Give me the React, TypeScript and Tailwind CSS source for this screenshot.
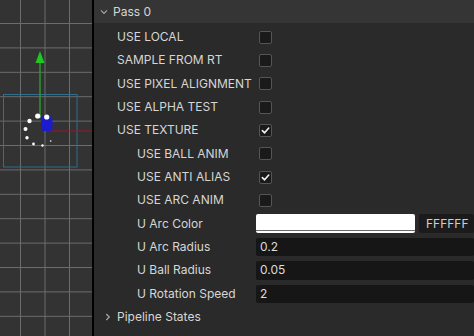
import React from "react";

const font = { fontFamily: "Inter, 'Liberation Sans', sans-serif" };

function Viewport() {
  const hs = Array.from({ length: 13 }, (_, k) => 23.5 + 24.4 * k);
  const vs = [20.5, 45, 69.5];
  return (
    <div className="w-[94px] h-full bg-[#333333] border-r-2 border-black shrink-0">
      <svg width="92" height="336" viewBox="0 0 92 336">
        {hs.map((y) => (
          <line key={"h" + y} x1="0" x2="92" y1={y} y2={y} stroke="#6c6c6c" strokeWidth="1" />
        ))}
        {vs.map((x) => (
          <line key={"v" + x} x1={x} x2={x} y1="0" y2="336" stroke="#6c6c6c" strokeWidth="1" />
        ))}
        <rect x="3.5" y="94.5" width="73.5" height="72.5" fill="none" stroke="#2f6f8f" strokeWidth="1" />
        <line x1="40" x2="40" y1="60" y2="118" stroke="#2c9a2c" strokeWidth="1.5" />
        <polygon points="40,51 35.5,63 44.5,63" fill="#1fc81f" />
        <line x1="51" x2="92" y1="131" y2="131" stroke="#9c1430" strokeWidth="1.2" />
        <rect x="41" y="116" width="11.5" height="15" rx="3" fill="#1c1ccc" />
        <circle cx="37.7" cy="116" r="2.6" fill="#fff" />
        <circle cx="46.7" cy="117" r="2.6" fill="#fff" />
        <circle cx="29.5" cy="121" r="2.2" fill="#fff" />
        <circle cx="25.5" cy="129" r="2" fill="#fff" />
        <circle cx="27" cy="137.7" r="1.7" fill="#fff" />
        <circle cx="33.5" cy="144" r="1.4" fill="#fff" />
        <circle cx="42.5" cy="145.5" r="1.2" fill="#fff" />
        <circle cx="50.7" cy="141" r="0.8" fill="#fff" />
      </svg>
    </div>
  );
}

function Check({ on }: { on?: boolean }) {
  return (
    <div className="w-[13px] h-[13px] rounded-[2px] border border-[#555555] bg-[#1a1a1a] flex items-center justify-center">
      {on && (
        <svg width="9" height="9" viewBox="0 0 10 10">
          <path d="M1.5 5.2 L4 7.6 L8.6 2.3" fill="none" stroke="#f2f2f2" strokeWidth="1.8" strokeLinecap="round" strokeLinejoin="round" />
        </svg>
      )}
    </div>
  );
}

function Row({ label, indent, children }: { label: string; indent?: boolean; children?: React.ReactNode }) {
  return (
    <div className="h-[23.33px] flex items-center">
      <div className={(indent ? "pl-[43px]" : "pl-[23px]") + " w-[162px] shrink-0 text-[12px] text-[#d6d6d6] whitespace-nowrap"}>
        {label}
      </div>
      <div className="flex-1 flex items-center">{children}</div>
    </div>
  );
}

function CheckRow({ label, indent, on }: { label: string; indent?: boolean; on?: boolean }) {
  return (
    <Row label={label} indent={indent}>
      <div className="pl-[3px]">
        <Check on={on} />
      </div>
    </Row>
  );
}

function NumRow({ label, value }: { label: string; value: string }) {
  return (
    <Row label={label} indent>
      <div className="flex-1 h-[18.5px] rounded-[2px] bg-[#161616] flex items-center pl-[4px] text-[12px] text-[#dcdcdc]">
        {value}
      </div>
    </Row>
  );
}

export default function App() {
  return (
    <div className="w-[474px] h-[336px] flex overflow-hidden bg-[#2a2a2a]" style={font}>
      <Viewport />
      <div className="flex-1 flex flex-col bg-[#2a2a2a]">
        <div className="h-[23px] bg-[#353535] flex items-center pl-[6px] text-[12px] text-[#d6d6d6]">
          <svg width="8" height="6" viewBox="0 0 8 6" className="mr-[5px]">
            <path d="M1 1.3 L4 4.3 L7 1.3" fill="none" stroke="#a8a8a8" strokeWidth="1.2" />
          </svg>
          Pass 0
        </div>
        <div className="h-[2.5px]" />
        <CheckRow label="USE LOCAL" />
        <CheckRow label="SAMPLE FROM RT" />
        <CheckRow label="USE PIXEL ALIGNMENT" />
        <CheckRow label="USE ALPHA TEST" />
        <CheckRow label="USE TEXTURE" on />
        <CheckRow label="USE BALL ANIM" indent />
        <CheckRow label="USE ANTI ALIAS" indent on />
        <CheckRow label="USE ARC ANIM" indent />
        <Row label="U Arc Color" indent>
          <div className="flex items-center gap-[4px] flex-1">
            <div className="w-[159px] h-[19px] flex flex-col rounded-[2px] overflow-hidden">
              <div className="h-[15.5px] bg-white" />
              <div className="h-[1.5px] bg-[#6a6a6a]" />
              <div className="h-[2px] bg-white" />
            </div>
            <div className="flex-1 h-[19px] rounded-[2px] bg-[#1b1b1b] flex items-center pl-[7px] text-[12px] text-[#cfcfcf]">
              FFFFFF
            </div>
          </div>
        </Row>
        <NumRow label="U Arc Radius" value="0.2" />
        <NumRow label="U Ball Radius" value="0.05" />
        <NumRow label="U Rotation Speed" value="2" />
        <div className="h-[23.33px] flex items-center pl-[11px] text-[12px] text-[#d6d6d6]">
          <svg width="6" height="8" viewBox="0 0 6 8" className="mr-[6px]">
            <path d="M1.3 1 L4.3 4 L1.3 7" fill="none" stroke="#a8a8a8" strokeWidth="1.2" />
          </svg>
          Pipeline States
        </div>
      </div>
    </div>
  );
}
